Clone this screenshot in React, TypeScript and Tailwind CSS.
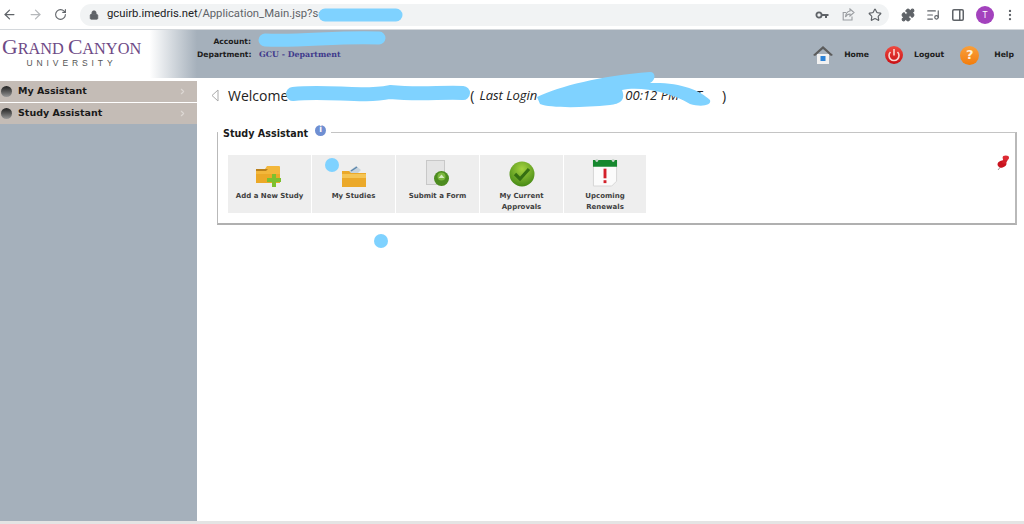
import { ArrowLeft, ArrowRight, RotateCw, Lock, Star, Puzzle, ListMusic, PanelRight, EllipsisVertical, ChevronRight } from "lucide-react";

const VERDANA = "font-['DejaVu_Sans',sans-serif]";

function FolderAddIcon() {
  return (
    <svg width="27" height="21" viewBox="0 0 27 21">
      <path d="M0 3 h9 l2 -3 h12 a1 1 0 0 1 1 1 v16 h-24 z" fill="#f3b73b" />
      <path d="M0 5 h10 l2 -2 h-12 z" fill="#b9801c" />
      <path d="M0 8 h24 v9 h-24 z" fill="#eca928" />
      <path d="M16 8 h4 v4 h5 v4 h-5 v5 h-4 v-5 h-5 v-4 h5 z" fill="#7dc02e" />
    </svg>
  );
}

function FolderOpenIcon() {
  return (
    <svg width="24" height="22" viewBox="0 0 24 22">
      <path d="M6 7 l8 -6 l5 4 l-5 5 z" fill="#c6d3dc" />
      <path d="M9 6 l6 -4" stroke="#5c87ad" strokeWidth="1.5" />
      <path d="M0 6 h7 l2 2 h15 v14 h-24 z" fill="#eba92a" />
      <path d="M0 9 h24 v4 h-24 z" fill="#f5c555" />
    </svg>
  );
}

function FormIcon() {
  return (
    <svg width="24" height="27" viewBox="0 0 24 27">
      <rect x="0.5" y="0.5" width="18" height="24" fill="#e4e4e4" stroke="#c8c8c8" />
      <circle cx="15.5" cy="18.5" r="7.5" fill="#4d8c20" />
      <circle cx="15.5" cy="16.5" r="4" fill="#7cb83e" />
      <path d="M15.5 14.5 l3 3.5 h-6 z" fill="#d7ebbf" />
    </svg>
  );
}

function CheckIcon() {
  return (
    <svg width="26" height="26" viewBox="0 0 26 26">
      <defs>
        <radialGradient id="approved" cx="50%" cy="30%" r="75%">
          <stop offset="0%" stopColor="#a5d33f" />
          <stop offset="100%" stopColor="#3f8413" />
        </radialGradient>
      </defs>
      <circle cx="13" cy="13" r="12.5" fill="url(#approved)" />
      <path d="M6 13 l5 5 l9 -10" fill="none" stroke="#356f12" strokeWidth="3.2" />
    </svg>
  );
}

function CalendarIcon() {
  return (
    <svg width="26" height="28" viewBox="0 0 27 29">
      <path d="M1.5 2 h24 v21 l-5 5 h-19 z" fill="#fbfbfb" stroke="#d5d5d5" />
      <rect x="1" y="1" width="25" height="7" fill="#16882e" />
      <circle cx="5" cy="1.5" r="1.5" fill="#c9d6cc" />
      <circle cx="22" cy="1.5" r="1.5" fill="#c9d6cc" />
      <rect x="12" y="10" width="3" height="10" fill="#d3202a" />
      <rect x="12" y="22" width="3" height="3" fill="#d3202a" />
    </svg>
  );
}

const tiles = [
  { label: ["Add a New Study"], icon: <FolderAddIcon />, width: "w-[83px]" },
  { label: ["My Studies"], icon: <FolderOpenIcon />, width: "w-[83px]" },
  { label: ["Submit a Form"], icon: <FormIcon />, width: "w-[83px]" },
  { label: ["My Current", "Approvals"], icon: <CheckIcon />, width: "w-[83px]" },
  { label: ["Upcoming", "Renewals"], icon: <CalendarIcon />, width: "w-[82px]" },
];

function BrowserBar() {
  return (
    <div className="flex h-[29px] items-center bg-white text-[#5f6368]">
      <ArrowLeft size={15} className="ml-[2px]" />
      <ArrowRight size={15} className="ml-[11px] text-[#b5b8bb]" />
      <RotateCw size={13} className="ml-[11px]" />
      <div className="ml-[13px] flex h-[22px] w-[809px] items-center rounded-full bg-[#f1f3f4] pl-[9px] pr-[7px] font-['Roboto',sans-serif] text-[11.3px]">
        <Lock size={10} fill="currentColor" />
        <span className="ml-[8px] text-[#202124]">gcuirb.imedris.net</span>
        <span className="text-[#5f6368]">/Application_Main.jsp?s=</span>
        <div className="ml-auto flex items-center gap-[13px]">
          <svg width="14" height="14" viewBox="0 0 14 14">
            <circle cx="4" cy="7" r="2.6" fill="none" stroke="currentColor" strokeWidth="1.8" />
            <path d="M6.5 6 H13.5 V8 H12 V10 H10 V8 H6.5 z" fill="currentColor" />
          </svg>
          <svg width="13" height="13" viewBox="0 0 13 13" fill="none" stroke="#9a9da1" strokeWidth="1.1">
            <path d="M4 4.5 H1.2 V12 H10 V8.5" />
            <path d="M8 1 L12 4.5 L8 8 V6 C6 6 4.5 7 3.5 9 C3.7 6 5.5 3.4 8 3 z" />
          </svg>
          <Star size={14} />
        </div>
      </div>
      <Puzzle size={14} fill="currentColor" className="ml-[12px]" />
      <ListMusic size={14} className="ml-[11px]" />
      <PanelRight size={14} strokeWidth={2.6} className="ml-[11px]" />
      <div className="ml-[11px] flex h-[18px] w-[18px] items-center justify-center rounded-full bg-[#a342bd] text-[9px] text-white">
        T
      </div>
      <EllipsisVertical size={14} className="ml-[9px]" />
    </div>
  );
}

function HeaderLink({ label, icon, gap }: { label: string; icon: React.ReactNode; gap: string }) {
  return (
    <div className={`flex items-center ${gap}`}>
      {icon}
      <span className="text-[7.7px] font-bold text-[#1d1d1d]">{label}</span>
    </div>
  );
}

function Header() {
  return (
    <div className={`flex h-[49px] border-t border-[#d4d8dc] bg-[#a5b0bb] ${VERDANA}`}>
      <div className="w-[197px] bg-gradient-to-r from-white from-[76%] to-[#a5b0bb] pl-[2px] pt-[8px] text-center font-['Liberation_Serif',serif] text-[#6e4a86]">
        <div className="w-[139px] whitespace-nowrap text-[16.3px] leading-[19px]">
          <span className="text-[21.7px]">G</span>RAND <span className="text-[21.7px]">C</span>ANYON
        </div>
        <div className="w-[139px] font-['Liberation_Sans',sans-serif] text-[8.5px] leading-[10px] tracking-[0.46em] text-[#555]">
          UNIVERSITY
        </div>
      </div>
      <div className="grid h-fit grid-cols-[54px_auto] gap-x-[8px] pt-[5px] text-[7.6px] font-bold leading-[13px] text-[#1d1d1d]">
        <span className="text-right">Account:</span>
        <span />
        <span className="text-right">Department:</span>
        <span className="font-['DejaVu_Serif',serif] text-[7.9px] text-[#3f3a8c]">GCU - Department</span>
      </div>
      <div className="ml-auto flex items-center pr-[10px] pt-[2px]">
        <HeaderLink
          label="Home"
          gap="gap-[11px]"
          icon={
            <svg width="20" height="20" viewBox="0 0 20 20">
              <path d="M4 9 h12 v10 h-12 z" fill="#f1f1f1" />
              <path d="M0 10 L10 1 L20 10 L18 11 L10 4 L2 11 z" fill="#5c5c5c" />
              <rect x="7.5" y="11" width="5" height="5" fill="#2c82d6" />
            </svg>
          }
        />
        <div className="w-[16px]" />
        <HeaderLink
          label="Logout"
          gap="gap-[11px]"
          icon={
            <svg width="18" height="18" viewBox="0 0 18 18">
              <defs>
                <linearGradient id="logout" x1="0" y1="0" x2="0" y2="1">
                  <stop offset="0%" stopColor="#f04a3f" />
                  <stop offset="100%" stopColor="#c80f14" />
                </linearGradient>
              </defs>
              <circle cx="9" cy="9" r="9" fill="url(#logout)" />
              <path d="M5.5 6 a5 5 0 1 0 7 0" fill="none" stroke="#f9d6d1" strokeWidth="1.6" />
              <rect x="8.2" y="3" width="1.6" height="6.5" fill="#f9d6d1" />
            </svg>
          }
        />
        <div className="w-[16px]" />
        <HeaderLink
          label="Help"
          gap="gap-[15px]"
          icon={
            <div className="flex h-[19px] w-[19px] items-center justify-center rounded-full bg-gradient-to-b from-[#f9a03a] to-[#f27c05] text-[13px] font-bold text-[#fff1dc]">
              ?
            </div>
          }
        />
      </div>
    </div>
  );
}

function SideItem({ label }: { label: string }) {
  return (
    <div className="flex h-[21px] items-center bg-[#c4bcb6] pl-[1px] pr-[10px] text-[9.5px] font-bold text-[#1a1a1a]">
      <span className="h-[11px] w-[11px] rounded-full bg-gradient-to-b from-[#222] to-[#999]" />
      <span className="ml-[6px]">{label}</span>
      <ChevronRight size={9} strokeWidth={3} className="ml-auto text-[#ddd8d4]" />
    </div>
  );
}

function Redactions() {
  return (
    <svg className="pointer-events-none absolute inset-0" width="1024" height="524" viewBox="0 0 1024 524">
      <g fill="none" stroke="#7fd2ff" strokeLinecap="round" strokeLinejoin="round">
        <path d="M325 15 H396" strokeWidth="13" />
        <path d="M265 40 C300 42 340 36 379 38" strokeWidth="13" />
        <path d="M293 94 C330 90 360 98 390 92 C420 95 440 92 463 93" strokeWidth="14" />
      </g>
      <path
        d="M537 97 C560 86 600 76 650 72 C656 72 656 80 650 83 C680 82 700 90 710 100 C712 106 700 107 690 104 C670 92 640 86 622 90 C626 100 620 104 610 105 C580 108 550 108 540 104 Z"
        fill="#7fd2ff"
      />
      <circle cx="332" cy="165" r="7" fill="#7fd2ff" />
      <circle cx="381" cy="241" r="7" fill="#7fd2ff" />
    </svg>
  );
}

export default function App() {
  return (
    <div className="relative flex h-[524px] w-[1024px] flex-col overflow-hidden bg-white">
      <BrowserBar />
      <Header />
      <div className="flex min-h-0 flex-1">
        <aside className={`w-[197px] bg-[#a5b0bb] ${VERDANA}`}>
          <div className="flex flex-col gap-px bg-white pt-[3px]">
            <SideItem label="My Assistant" />
            <SideItem label="Study Assistant" />
          </div>
        </aside>
        <main className="relative min-w-0 flex-1 pl-[20px]">
          <div className="flex h-[34px] items-center pt-[1px] font-['Open_Sans',sans-serif] text-[14px] text-[#222]">
            <svg width="8" height="13" viewBox="0 0 8 13" className="-ml-[6px]">
              <path d="M7 1 L1 6.5 L7 12 z" fill="#fff" stroke="#aaa" />
            </svg>
            <span className="ml-[9px]">Welcome</span>
            <span className="ml-[182px]">(</span>
            <i className="ml-[5px] text-[13px]">Last Login</i>
            <i className="ml-[88px] text-[13px]">00:12 PM EST</i>
            <span className="ml-[20px]">)</span>
          </div>
          <fieldset className={`mt-[13px] h-[100px] w-[800px] border-y border-b-2 border-l border-r-2 border-b-[#b0b0b0] border-l-[#b9b9b9] border-r-[#b9b9b9] border-t-[#c4c4c4] pl-[10px] ${VERDANA}`}>
            <legend className="ml-[-10px] flex items-center px-[5px] text-[9.6px] font-bold text-[#1a1a1a]">
              <span className="translate-y-[2px]">Study Assistant</span>
              <span className="ml-[7px] flex h-[11px] w-[11px] -translate-y-[2px] items-center justify-center rounded-full bg-[#6f8fd2] text-[8px] text-white">
                i
              </span>
            </legend>
            <div className="absolute right-[15px] top-[77px]">
              <svg width="12" height="16" viewBox="0 0 12 16">
                <path d="M1 15 L5 10" stroke="#999" />
                <ellipse cx="5" cy="9" rx="4.5" ry="3.4" fill="#c9141f" transform="rotate(-20 5 9)" />
                <path d="M5 8 L6.5 3 L11 4.5 L8.5 9 z" fill="#d3202a" />
                <ellipse cx="8.8" cy="2.8" rx="3.2" ry="2.4" fill="#dd2a33" />
              </svg>
            </div>
            <div className="mt-[16px] flex gap-px">
              {tiles.map((tile) => (
                <div
                  key={tile.label[0]}
                  className={`flex h-[58px] ${tile.width} flex-col items-center bg-[#eeeeee] text-center text-[7px] font-bold leading-[11px] text-[#3f3f3f]`}
                >
                  <div className="flex h-[35px] items-end justify-center pb-[3px]">{tile.icon}</div>
                  <div className="pt-[1px]">
                    {tile.label.map((line) => (
                      <div key={line}>{line}</div>
                    ))}
                  </div>
                </div>
              ))}
            </div>
          </fieldset>
        </main>
      </div>
      <div className="h-[3px] bg-[#e4e4e4]" />
      <Redactions />
    </div>
  );
}
